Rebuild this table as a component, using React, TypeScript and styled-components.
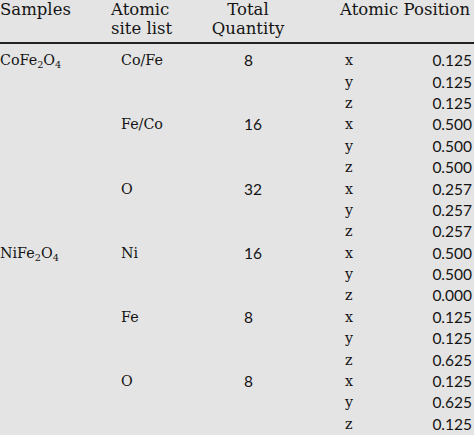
import React from "react";
import styled, { createGlobalStyle } from "styled-components";

const Global = createGlobalStyle`
  html, body { margin: 0; padding: 0; background: #e4e4e4; }
  body { width: 474px; height: 435px; overflow: hidden; }
`;

const Page = styled.div`
  width: 474px;
  height: 435px;
  background: #e4e4e4;
  color: #141414;
  overflow: hidden;
`;

const Header = styled.div`
  display: grid;
  grid-template-columns: 111px 99px 76px 54px 1fr;
  height: 42px;
  border-bottom: 2px solid #222;
  font-family: "DejaVu Serif", serif;
  font-size: 16.5px;
  line-height: 19px;
  white-space: nowrap;
`;

const HeadCell = styled.div<{ $center?: boolean }>`
  text-align: ${(p) => (p.$center ? "center" : "left")};
`;

const Body = styled.div`
  padding-top: 6px;
`;

const Row = styled.div`
  display: grid;
  grid-template-columns: 121px 123px 101px 60px 1fr;
  height: 21.4px;
  align-items: center;
  white-space: nowrap;
`;

const SerifCell = styled.div`
  font-family: "DejaVu Serif", serif;
  font-size: 14.3px;
  line-height: 21px;
`;

const SansCell = styled.div<{ $right?: boolean }>`
  font-family: Lato, "Open Sans", sans-serif;
  font-size: 15.5px;
  line-height: 21px;
  text-align: ${(p) => (p.$right ? "right" : "left")};
  padding-right: ${(p) => (p.$right ? "2px" : "0")};
`;

const Sub = styled.sub`
  font-size: 0.68em;
  line-height: 0;
  vertical-align: -0.3em;
`;

type Entry = { sample?: React.ReactNode; site?: string; qty?: string; axis: string; value: string };

const Formula = ({ metal }: { metal: string }) => (
  <>
    {metal}Fe<Sub>2</Sub>O<Sub>4</Sub>
  </>
);

const rows: Entry[] = [
  { sample: <Formula metal="Co" />, site: "Co/Fe", qty: "8", axis: "x", value: "0.125" },
  { axis: "y", value: "0.125" },
  { axis: "z", value: "0.125" },
  { site: "Fe/Co", qty: "16", axis: "x", value: "0.500" },
  { axis: "y", value: "0.500" },
  { axis: "z", value: "0.500" },
  { site: "O", qty: "32", axis: "x", value: "0.257" },
  { axis: "y", value: "0.257" },
  { axis: "z", value: "0.257" },
  { sample: <Formula metal="Ni" />, site: "Ni", qty: "16", axis: "x", value: "0.500" },
  { axis: "y", value: "0.500" },
  { axis: "z", value: "0.000" },
  { site: "Fe", qty: "8", axis: "x", value: "0.125" },
  { axis: "y", value: "0.125" },
  { axis: "z", value: "0.625" },
  { site: "O", qty: "8", axis: "x", value: "0.125" },
  { axis: "y", value: "0.625" },
  { axis: "z", value: "0.125" },
];

export default function App() {
  return (
    <Page>
      <Global />
      <Header>
        <HeadCell>Samples</HeadCell>
        <HeadCell>
          Atomic
          <br />
          site list
        </HeadCell>
        <HeadCell $center>
          Total
          <br />
          Quantity
        </HeadCell>
        <HeadCell />
        <HeadCell>Atomic Position</HeadCell>
      </Header>
      <Body>
        {rows.map((r, i) => (
          <Row key={i}>
            <SerifCell>{r.sample}</SerifCell>
            <SerifCell>{r.site}</SerifCell>
            <SansCell>{r.qty}</SansCell>
            <SerifCell>{r.axis}</SerifCell>
            <SansCell $right>{r.value}</SansCell>
          </Row>
        ))}
      </Body>
    </Page>
  );
}
